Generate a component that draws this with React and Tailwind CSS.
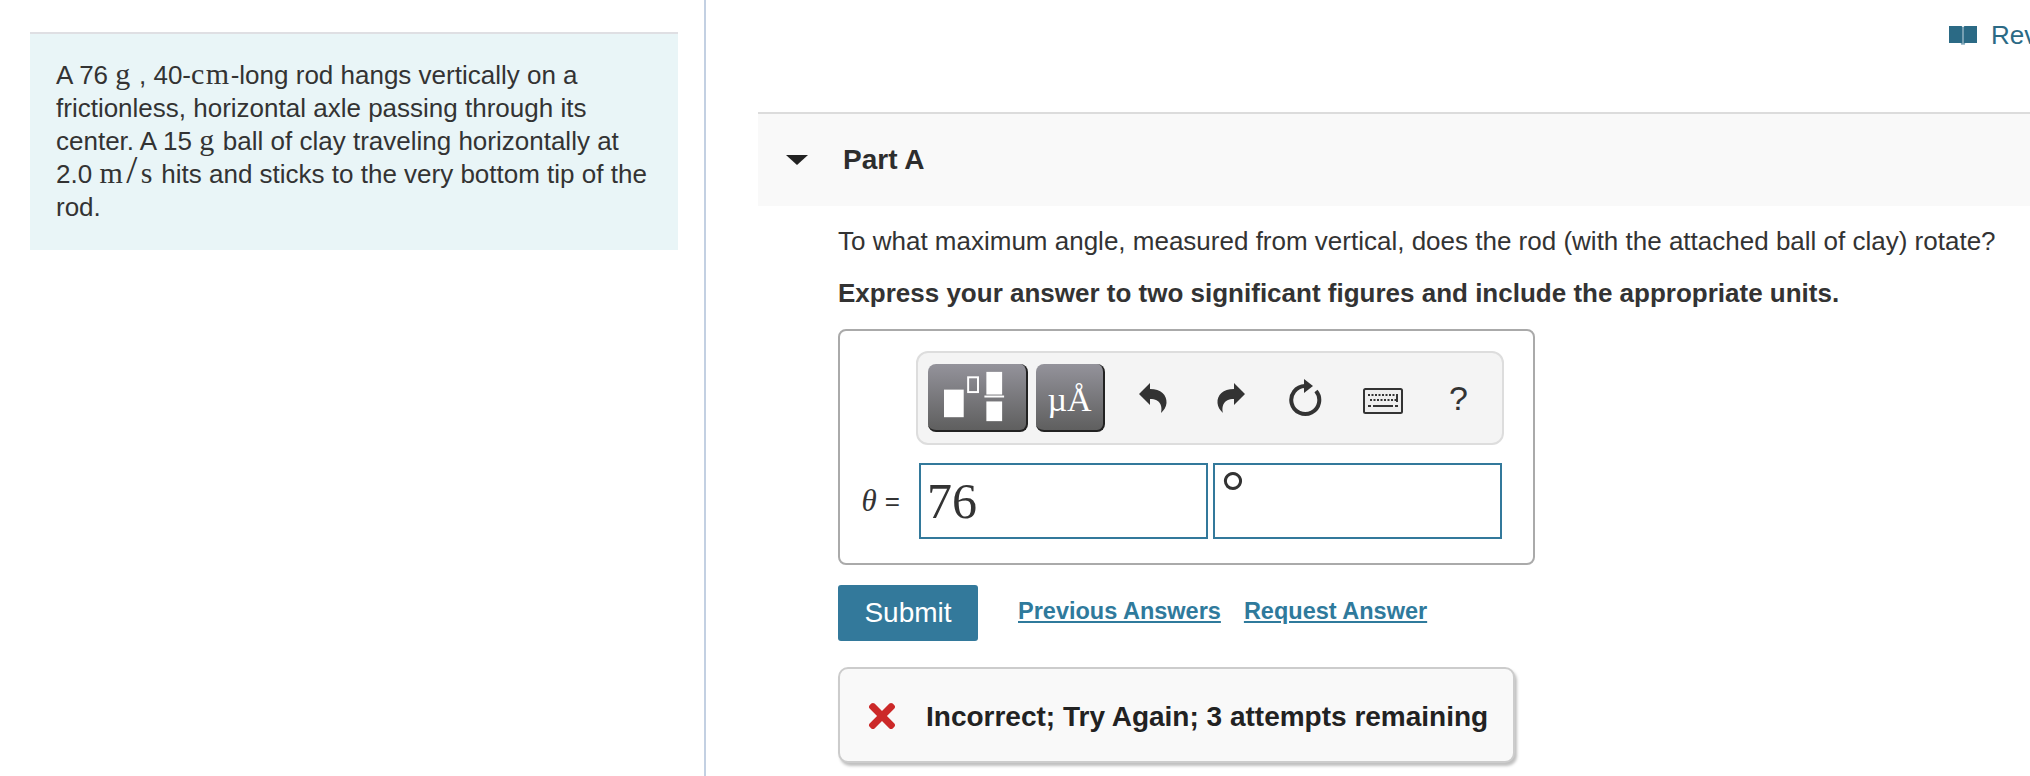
import { FaTimes } from 'react-icons/fa';

const sans = "font-['Liberation_Sans',Arial,sans-serif]";
const math = "font-['Liberation_Serif',serif] text-[30px] leading-[0] tracking-[1.5px]";

function TemplateIcon() {
  return (
    <svg width="99" height="67" viewBox="0 0 100 68" className="block">
      <rect x="16" y="26" width="20" height="28" fill="#fff" />
      <rect x="40.5" y="13.5" width="10" height="15" fill="none" stroke="#fff" strokeWidth="2" />
      <rect x="59" y="8" width="16" height="23" fill="#fff" />
      <rect x="57" y="32" width="20" height="2" fill="#fff" />
      <rect x="59" y="38" width="16" height="20" fill="#fff" />
    </svg>
  );
}

function ArrowIcon({ flip }) {
  return (
    <svg width="28" height="32" viewBox="0 0 28 32" className={flip ? 'block shrink-0 -scale-x-100' : 'block shrink-0'}>
      <path d="M0 12 L11 1 V7 C22 7 28 13 27.5 21 C27.3 25 25 28 22 31 C23.5 25 22 17 11 17 V23 Z" fill="#333" />
    </svg>
  );
}

function ResetIcon() {
  return (
    <svg width="36" height="38" viewBox="0 0 36 38" className="block">
      <path d="M17 7 A14 14 0 1 0 28 12" fill="none" stroke="#333" strokeWidth="4" />
      <path d="M16 0 L25 7 L16 14 Z" fill="#333" />
    </svg>
  );
}

function KeyboardIcon() {
  const top = [0, 1, 2, 3, 4, 5, 6, 7, 8];
  const mid = [0, 1, 2, 3, 4, 5, 6, 7];
  return (
    <svg width="40" height="26" viewBox="0 0 40 26" className="block">
      <rect x="1" y="1" width="38" height="24" rx="1.5" fill="#eee" stroke="#333" strokeWidth="2" />
      {top.map((i) => (
        <rect key={i} x={5 + i * 3.5} y="6" width="2" height="2" fill="#333" />
      ))}
      {mid.map((i) => (
        <rect key={i} x={7 + i * 3.5} y="11" width="2" height="2" fill="#333" />
      ))}
      <rect x="33" y="6" width="2" height="8" fill="#333" />
      <rect x="5" y="17" width="3" height="2" fill="#333" />
      <rect x="10" y="17" width="20" height="2" fill="#333" />
      <rect x="32" y="17" width="3" height="2" fill="#333" />
    </svg>
  );
}

function BookIcon() {
  return (
    <svg width="28" height="20" viewBox="0 0 28 20" className="block shrink-0">
      <rect x="12" y="2" width="4" height="18" fill="#a9c3d0" />
      <path d="M0 1 H12 Q13.4 1 13.4 2 V19 Q13 18 11 18 H0 Z" fill="#2b6a85" />
      <path d="M28 1 H16 Q14.6 1 14.6 2 V19 Q15 18 17 18 H28 Z" fill="#2b6a85" />
    </svg>
  );
}

export default function App() {
  return (
    <div className={`flex h-[776px] w-[2030px] overflow-hidden bg-white text-[#333] ${sans}`}>
      <div className="w-[706px] shrink-0 border-r-2 border-[#c3d0e2] pt-8 pl-[30px] pr-[26px]">
        <div className="h-[218px] w-[648px] border-t-2 border-[#dfdfe3] bg-[#e9f5f7] pt-[25px] pl-[26px] pr-[20px] text-[26px] leading-[33px]">
          A 76 <span className={math}>g</span> , 40-<span className={math}>cm</span>-long rod hangs vertically on a
          frictionless, horizontal axle passing through its center. A 15 <span className={math}>g</span> ball of clay
          traveling horizontally at 2.0{' '}
          <span className={math}>
            m<span className="px-[2px] text-[40px] font-light">/</span>s
          </span>{' '}
          hits and sticks to the very bottom tip of the rod.
        </div>
      </div>

      <div className="min-w-0 flex-1 pl-[52px]">
        <div className="flex h-[112px] items-start whitespace-nowrap pl-[1191px] pt-[22px]">
          <a className="flex shrink-0 items-center gap-[14px] text-[26px] leading-[26px] text-[#2b6a85]">
            <BookIcon />
            Review
          </a>
        </div>

        <div className="flex h-[94px] items-center border-t-2 border-[#dcdcdc] bg-[#f9f9f9] pl-[28px]">
          <div className="h-0 w-0 border-x-[11px] border-t-[10px] border-x-transparent border-t-[#222]" />
          <h2 className="ml-[35px] text-[28px] font-bold text-[#2d2d2d]">Part A</h2>
        </div>

        <div className="pl-[80px]">
          <p className="mt-[19px] whitespace-nowrap text-[26px] leading-[32px]">
            To what maximum angle, measured from vertical, does the rod (with the attached ball of clay) rotate?
          </p>
          <p className="mt-[20px] whitespace-nowrap text-[26px] font-bold leading-[32px]">
            Express your answer to two significant figures and include the appropriate units.
          </p>

          <div className="mt-[20px] h-[236px] w-[697px] rounded-[8px] border-2 border-[#aaa] pt-[20px] pl-[19px]">
            <div className="ml-[57px] flex h-[94px] w-[588px] items-center rounded-[12px] border-2 border-[#ddd] bg-[#f4f4f4] pl-[10px]">
              <div className="h-[68px] w-[100px] rounded-[8px] border-b-2 border-r-2 border-[#222] bg-gradient-to-b from-[#94939b] to-[#5f5f5f]">
                <TemplateIcon />
              </div>
              <div className="ml-2 flex h-[68px] w-[69px] items-end justify-center rounded-[8px] border-b-2 border-r-2 border-[#222] bg-gradient-to-b from-[#94939b] to-[#5f5f5f] pb-[13px] font-['Liberation_Serif',serif] text-[34px] leading-none text-white">
                µÅ
              </div>
              <div className="ml-[34px]">
                <ArrowIcon />
              </div>
              <div className="ml-[50px]">
                <ArrowIcon flip />
              </div>
              <div className="ml-[43px]">
                <ResetIcon />
              </div>
              <div className="ml-[39px] mt-[5px]">
                <KeyboardIcon />
              </div>
              <span className="ml-[46px] -mt-[1px] text-[34px] leading-none text-[#333]">?</span>
            </div>

            <div className="mt-[18px] flex items-center">
              <span className="flex w-[60px] shrink-0 items-center justify-end gap-[8px] whitespace-nowrap pr-[19px] text-[26px]">
                <i className="font-['Liberation_Serif',serif] text-[31px]">θ</i> =
              </span>
              <div className="flex h-[76px] w-[289px] items-center border-2 border-[#33799b] pl-[6px] font-['Liberation_Serif',serif] text-[50px] leading-none">
                76
              </div>
              <div className="ml-[5px] h-[76px] w-[289px] border-2 border-[#33799b] pl-[6px] font-['Liberation_Serif',serif] text-[60px] leading-[54px]">
                °
              </div>
            </div>
          </div>

          <div className="mt-[20px] flex items-center">
            <button className="h-[56px] w-[140px] rounded-[3px] bg-[#33799b] text-[28px] text-white">Submit</button>
            <a className="ml-10 -mt-[3px] text-[23.5px] font-bold text-[#2f7a9c] underline underline-offset-2">Previous Answers</a>
            <a className="ml-[23px] -mt-[3px] text-[23.5px] font-bold text-[#2f7a9c] underline underline-offset-2">Request Answer</a>
          </div>

          <div className="mt-[26px] flex h-[96px] w-[677px] items-center rounded-[10px] border-2 border-[#ccc] bg-[#f9f9f9] pl-[23px] pt-[2px] shadow-[2px_3px_3px_rgba(0,0,0,0.25)]">
            <FaTimes className="text-[38px] text-[#cc2929]" />
            <span className="ml-[25px] mt-[2px] whitespace-nowrap text-[28px] font-bold text-[#222]">
              Incorrect; Try Again; 3 attempts remaining
            </span>
          </div>
        </div>
      </div>
    </div>
  );
}
